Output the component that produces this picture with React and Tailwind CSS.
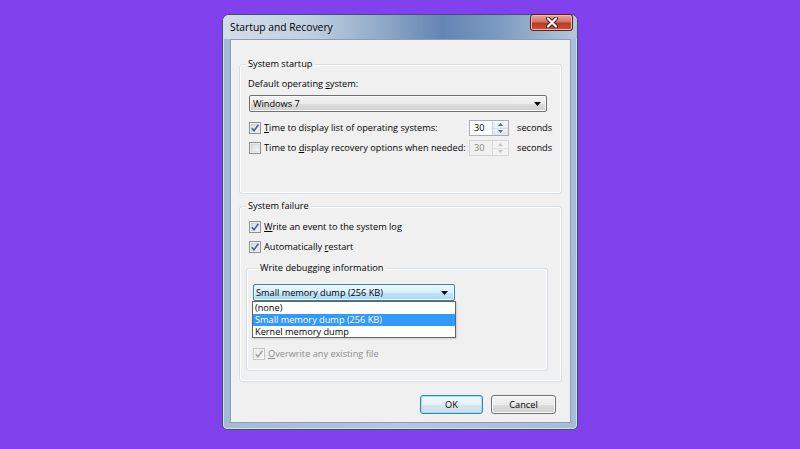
import React from 'react'

const ui = "font-['Open_Sans',sans-serif]"

function Check({ checked, disabled }) {
  const edge = disabled ? '#c5c5c5' : '#8e8f8f'
  const mark = disabled ? '#a3a3a3' : '#4a5f97'
  return (
    <svg width="12" height="12" viewBox="0 0 12 12" className="shrink-0">
      <defs>
        <linearGradient id={disabled ? 'cbd' : 'cbn'} x1="0" y1="0" x2="1" y2="1">
          <stop offset="0" stopColor={disabled ? '#ececec' : '#d6d6d6'} />
          <stop offset="1" stopColor={disabled ? '#f7f7f7' : '#fbfbfb'} />
        </linearGradient>
      </defs>
      <rect x="0.5" y="0.5" width="11" height="11" fill="#fff" stroke={edge} />
      <rect x="2" y="2" width="8" height="8" fill={`url(#${disabled ? 'cbd' : 'cbn'})`} stroke={disabled ? '#e0e0e0' : '#c3c3c3'} strokeWidth="0.6" />
      {checked && (
        <path d="M2.8 6.2 L5 8.8 L9.4 2.8" fill="none" stroke={mark} strokeWidth="1.6" />
      )}
    </svg>
  )
}

function Arrow() {
  return (
    <svg width="7" height="4" viewBox="0 0 7 4">
      <path d="M0 0 H7 L3.5 4 Z" fill="#000" />
    </svg>
  )
}

function Spin({ disabled }) {
  const c = disabled ? '#bfbfbf' : '#4d6a8f'
  return (
    <div className={`flex flex-col w-[16px] h-full border-l ${disabled ? 'border-[#d6d6d6]' : 'border-[#c8cfd8]'}`}>
      <div className={`flex-1 flex items-center justify-center border-b ${disabled ? 'border-[#e0e0e0] bg-[#f3f3f3]' : 'border-[#d3dae2] bg-[linear-gradient(#f6f8fa,#e6ebf0)]'}`}>
        <svg width="5" height="3" viewBox="0 0 5 3"><path d="M0 3 L2.5 0 L5 3 Z" fill={c} /></svg>
      </div>
      <div className={`flex-1 flex items-center justify-center ${disabled ? 'bg-[#f3f3f3]' : 'bg-[linear-gradient(#eef1f4,#dfe5ec)]'}`}>
        <svg width="5" height="3" viewBox="0 0 5 3"><path d="M0 0 H5 L2.5 3 Z" fill={c} /></svg>
      </div>
    </div>
  )
}

function NumBox({ disabled }) {
  return (
    <div className={`ml-auto shrink-0 flex h-[16px] w-[40px] border ${disabled ? 'border-[#d5d5d5] bg-[#f0f0f0] text-[#8a8a8a]' : 'border-[#abadb3] bg-white text-black'}`}>
      <div className="flex-1 pl-[4px] leading-[14px]">30</div>
      <Spin disabled={disabled} />
    </div>
  )
}

function Legend({ children, indent }) {
  return (
    <div className={`self-start -mt-[8px] ${indent} px-[2px] bg-[#f0f0f0] leading-[13px]`}>
      {children}
    </div>
  )
}

function CheckRow({ checked, disabled, children, className = '' }) {
  return (
    <div className={`flex items-center h-[16px] gap-[3px] whitespace-nowrap ${className}`}>
      <Check checked={checked} disabled={disabled} />
      <span className={disabled ? 'text-[#8d8d8d]' : ''}>{children}</span>
    </div>
  )
}

function Button({ children, primary }) {
  return (
    <button
      className={`h-[19px] rounded-[3px] border leading-[15px] text-black ${
        primary
          ? 'w-[63px] border-[#3c7fb1] shadow-[inset_0_0_0_1px_#9fe3fb] bg-[linear-gradient(#f2f8fc_0%,#e8f1f7_50%,#d6e6f0_51%,#cadde9_100%)]'
          : 'w-[65px] border-[#707070] shadow-[inset_0_0_0_1px_#fcfcfc] bg-[linear-gradient(#f2f2f2_0%,#ebebeb_50%,#dddddd_51%,#cfcfcf_100%)]'
      }`}
    >
      {children}
    </button>
  )
}

export default function App() {
  return (
    <div className={`min-h-[449px] bg-[#8142ee] flex justify-center pt-[14px] ${ui}`}>
      <div className="w-[356px] h-[416px] flex flex-col rounded-t-[7px] rounded-b-[5px] border border-[#3e526d] bg-[linear-gradient(90deg,#a3bad5,#b3c7de_50%,#a6bdd8)] shadow-[inset_0_0_0_1px_#d3e0ed]">
        {/* title bar */}
        <div className="h-[24px] flex items-start justify-between pl-[7px] pr-[4px] rounded-t-[6px] bg-[linear-gradient(90deg,#d3dde8_0%,#c0cfdf_25%,#8fa9c8_45%,#6385b2_62%,#7c9ac0_78%,#b5c7dc_100%)]">
          <span className="pt-[5px] text-[10.3px] leading-[14px] text-black">Startup and Recovery</span>
          <div className="-mt-[1px] w-[43px] h-[17px] rounded-[3px] border border-[#5b1f17] flex items-center justify-center bg-[linear-gradient(#e6a99f_0%,#d27263_45%,#bd3a27_55%,#c9503b_100%)] shadow-[inset_0_0_0_1px_#eebcb3]">
            <svg width="14" height="11" viewBox="0 0 14 11">
              <path d="M3 1.5 L11 9.5 M11 1.5 L3 9.5" stroke="#4a1c16" strokeWidth="4" strokeLinecap="round" />
              <path d="M3 1.5 L11 9.5 M11 1.5 L3 9.5" stroke="#fff" strokeWidth="2.2" strokeLinecap="round" />
            </svg>
          </div>
        </div>

        {/* body */}
        <div className="pl-[7px] pr-[6px] pb-[6px]">
          <div className="w-[341px] h-[384px] border border-[#8b9db5] bg-[#f0f0f0] flex flex-col px-[8px] text-[9.2px] text-black">
            {/* System startup */}
            <div className="mt-[24px] h-[130px] border border-[#d5dfe5] rounded-[3px] shadow-[inset_0_0_0_1px_#ffffff] flex flex-col pl-[8px] pr-[10px]">
              <Legend indent="-ml-[2px]">System startup</Legend>
              <div className="mt-[7px] leading-[13px]">
                Default operating <span className="underline underline-offset-1">s</span>ystem:
              </div>
              <div className="mt-[5px] ml-[1px] mr-[4px] h-[17px] border border-[#707070] rounded-[2px] flex items-center justify-between pl-[3px] pr-[5px] bg-[linear-gradient(#f2f2f2_0%,#ebebeb_50%,#dddddd_51%,#cfcfcf_100%)] shadow-[inset_0_0_0_1px_#fafafa]">
                <span className="leading-[13px]">Windows 7</span>
                <Arrow />
              </div>
              <div className="mt-[8px] flex items-center h-[16px] ml-[1px]">
                <CheckRow checked>
                  <span className="underline underline-offset-1">T</span>ime to display list of operating systems:
                </CheckRow>
                <NumBox />
                <span className="w-[42px] shrink-0 pl-[8px]">seconds</span>
              </div>
              <div className="mt-[4px] flex items-center h-[16px] ml-[1px]">
                <CheckRow>
                  Time to <span className="underline underline-offset-1">d</span>isplay recovery options when needed:
                </CheckRow>
                <NumBox disabled />
                <span className="w-[42px] shrink-0 pl-[8px]">seconds</span>
              </div>
            </div>

            {/* System failure */}
            <div className="mt-[12px] h-[176px] border border-[#d5dfe5] rounded-[3px] shadow-[inset_0_0_0_1px_#ffffff] flex flex-col pl-[8px] pr-[10px]">
              <Legend indent="-ml-[2px]">System failure</Legend>
              <CheckRow checked className="mt-[7px] ml-[1px]">
                <span className="underline underline-offset-1">W</span>rite an event to the system log
              </CheckRow>
              <CheckRow checked className="mt-[4px] ml-[1px]">
                Automatically <span className="underline underline-offset-1">r</span>estart
              </CheckRow>

              <div className="mt-[13px] -ml-[2px] mr-[3px] h-[103px] border border-[#d5dfe5] rounded-[3px] shadow-[inset_0_0_0_1px_#ffffff] flex flex-col pl-[6px]">
                <Legend indent="ml-[5px]">Write debugging information</Legend>
                <div className="relative mt-[10px] w-[202px]">
                  <div className="h-[17px] border border-[#3c7fb1] rounded-[2px] flex items-center justify-between pl-[2px] pr-[6px] bg-[linear-gradient(#eaf6fd_0%,#d9f0fc_50%,#bee6fd_51%,#a7d9f5_100%)] shadow-[inset_0_0_0_1px_#f4fbfe]">
                    <span className="leading-[13px]">Small memory dump (256 KB)</span>
                    <Arrow />
                  </div>
                  <div className="absolute left-[-1px] top-[17px] w-[204px] border border-[#646464] bg-white z-10 shadow-[1px_1px_2px_rgba(0,0,0,0.15)]">
                    <div className="h-[12px] leading-[12px] pl-[2px]">(none)</div>
                    <div className="h-[12px] leading-[12px] pl-[2px] bg-[#3399ff] text-white">Small memory dump (256 KB)</div>
                    <div className="h-[11px] leading-[11px] pl-[2px]">Kernel memory dump</div>
                  </div>
                </div>
                <CheckRow checked disabled className="mt-[45px]">
                  <span className="underline underline-offset-1">O</span>verwrite any existing file
                </CheckRow>
              </div>
            </div>

            {/* buttons */}
            <div className="mt-[13px] flex justify-end gap-[8px] mr-[6px]">
              <Button primary>OK</Button>
              <Button>Cancel</Button>
            </div>
          </div>
        </div>
      </div>
    </div>
  )
}
